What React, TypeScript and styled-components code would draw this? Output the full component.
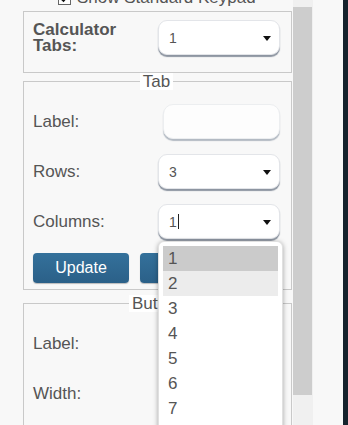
import React from 'react';
import styled, { createGlobalStyle } from 'styled-components';

const Global = createGlobalStyle`
  html, body { margin: 0; padding: 0; background: #f8f8f8; overflow: hidden; }
  body { width: 348px; height: 425px; font-family: "Liberation Sans", Arial, sans-serif; }
`;

const Page = styled.div`
  display: flex;
  width: 348px;
  height: 425px;
  overflow: hidden;
`;

const Panel = styled.div`
  width: 293px;
  flex: none;
  padding-left: 23px;
  box-sizing: border-box;
  background: #f8f8f8;
`;

const ScrollTrack = styled.div`
  width: 20px;
  flex: none;
  background: #f0f0f0;
  padding-top: 7px;
  box-sizing: border-box;
`;

const ScrollThumb = styled.div`
  width: 19px;
  height: 388px;
  background: #cdcdcd;
`;

const Gutter = styled.div`
  flex: 1;
  background: #f8f8f8;
`;

const DarkEdge = styled.div`
  width: 5px;
  flex: none;
  background: #15232d;
`;

const CheckRow = styled.div`
  display: flex;
  align-items: flex-end;
  height: 20px;
  margin-top: -12px;
  margin-bottom: 3px;
  padding-left: 35px;
  gap: 6px;
  font-size: 17px;
  line-height: 20px;
  color: #555;
  white-space: nowrap;
`;

const CheckBox = styled.span`
  width: 13px;
  height: 13px;
  flex: none;
  box-sizing: border-box;
  border: 1px solid #666;
  background: #fff;
  display: flex;
  align-items: center;
  justify-content: center;
  margin-bottom: 3px;
`;

const Fieldset = styled.fieldset<{ $pad: string; $top?: number }>`
  margin: ${(p) => p.$top ?? 0}px 0 0;
  padding: ${(p) => p.$pad};
  border: 1px solid #c9c9c9;
  width: 269px;
  min-width: 0;
  box-sizing: border-box;
`;

const Legend = styled.legend`
  margin: 11px auto 0;
  padding: 0 3px;
  background: #fff;
  font-size: 17px;
  line-height: 17px;
  color: #555;
`;

const Row = styled.div<{ $gap?: number }>`
  display: grid;
  grid-template-columns: 1fr 122px;
  align-items: center;
  height: 35px;
  margin-bottom: ${(p) => p.$gap ?? 0}px;
`;

const FieldLabel = styled.div<{ $bold?: boolean }>`
  font-size: 17px;
  line-height: ${(p) => (p.$bold ? '16px' : '20px')};
  font-weight: ${(p) => (p.$bold ? 'bold' : 'normal')};
  color: #555;
`;

const Control = styled.div`
  position: relative;
  height: 35px;
`;

const SelectBox = styled.div`
  height: 35px;
  box-sizing: border-box;
  border: 1px solid #e3e5e9;
  border-radius: 9px;
  background: #fff;
  box-shadow: 0 2px 1px #8d95a1;
  display: flex;
  align-items: center;
  padding: 0 8px 0 10px;
  font-size: 14px;
  color: #555;
`;

const SelectText = styled.span`
  flex: 1;
  display: flex;
  align-items: center;
`;

const Caret = styled.span`
  width: 0;
  height: 0;
  border-left: 4px solid transparent;
  border-right: 4px solid transparent;
  border-top: 5px solid #111;
  margin-top: 2px;
`;

const TextCursor = styled.span`
  display: inline-block;
  width: 1px;
  height: 15px;
  background: #222;
  margin-left: 1px;
`;

const TextInput = styled.div`
  justify-self: end;
  width: 117px;
  height: 35px;
  box-sizing: border-box;
  border: 1px solid #eceef0;
  border-radius: 10px;
  background: #fdfdfd;
  box-shadow: 0 2px 1px #b3bac3;
`;

const ButtonRow = styled.div`
  display: flex;
  gap: 11px;
`;

const Button = styled.button`
  width: 96px;
  height: 30px;
  border: none;
  border-radius: 4px;
  background: linear-gradient(#34719b, #2b6088);
  box-shadow: 0 1px 1px rgba(0, 0, 0, 0.25);
  color: #fff;
  font-family: "Liberation Sans", Arial, sans-serif;
  font-size: 16px;
  padding: 0;
`;

const DropList = styled.div`
  position: absolute;
  top: 37px;
  left: 0;
  width: 125px;
  box-sizing: border-box;
  padding: 4px;
  background: #fff;
  border: 1px solid #e0e0e0;
  border-radius: 6px;
  box-shadow: 0 1px 5px rgba(0, 0, 0, 0.35);
  z-index: 10;
`;

const Option = styled.div<{ $state?: 'selected' | 'hover' }>`
  height: 25px;
  line-height: 25px;
  padding-left: 5px;
  font-size: 17px;
  color: #555;
  background: ${(p) =>
    p.$state === 'selected' ? '#cbcbcb' : p.$state === 'hover' ? '#ececec' : 'transparent'};
`;

const Select = ({ value, cursor }: { value: string; cursor?: boolean }) => (
  <SelectBox>
    <SelectText>
      {value}
      {cursor && <TextCursor />}
    </SelectText>
    <Caret />
  </SelectBox>
);

export default function App() {
  const options = ['1', '2', '3', '4', '5', '6', '7', '8', '9', '10'];
  return (
    <>
      <Global />
      <Page>
        <Panel>
          <CheckRow>
            <CheckBox>
              <svg width="9" height="9" viewBox="0 0 9 9">
                <path d="M1 4.5 L3.5 7 L8 1.5" stroke="#111" strokeWidth="1.8" fill="none" />
              </svg>
            </CheckBox>
            Show Standard Keypad
          </CheckRow>

          <Fieldset $pad="8px 11px 17px 9px">
            <Row>
              <FieldLabel $bold>
                Calculator
                <br />
                Tabs:
              </FieldLabel>
              <Select value="1" />
            </Row>
          </Fieldset>

          <Fieldset $pad="14px 11px 6px 9px">
            <Legend>Tab</Legend>
            <Row $gap={15}>
              <FieldLabel>Label:</FieldLabel>
              <TextInput />
            </Row>
            <Row $gap={15}>
              <FieldLabel>Rows:</FieldLabel>
              <Select value="3" />
            </Row>
            <Row $gap={14}>
              <FieldLabel>Columns:</FieldLabel>
              <Control>
                <Select value="1" cursor />
                <DropList>
                  {options.map((o, i) => (
                    <Option key={o} $state={i === 0 ? 'selected' : i === 1 ? 'hover' : undefined}>
                      {o}
                    </Option>
                  ))}
                </DropList>
              </Control>
            </Row>
            <ButtonRow>
              <Button>Update</Button>
              <Button>Delete</Button>
            </ButtonRow>
          </Fieldset>

          <Fieldset $pad="14px 11px 6px 9px" $top={5}>
            <Legend>Button</Legend>
            <Row $gap={15}>
              <FieldLabel>Label:</FieldLabel>
              <TextInput />
            </Row>
            <Row $gap={15}>
              <FieldLabel>Width:</FieldLabel>
              <TextInput />
            </Row>
          </Fieldset>
        </Panel>
        <ScrollTrack>
          <ScrollThumb />
        </ScrollTrack>
        <Gutter />
        <DarkEdge />
      </Page>
    </>
  );
}
